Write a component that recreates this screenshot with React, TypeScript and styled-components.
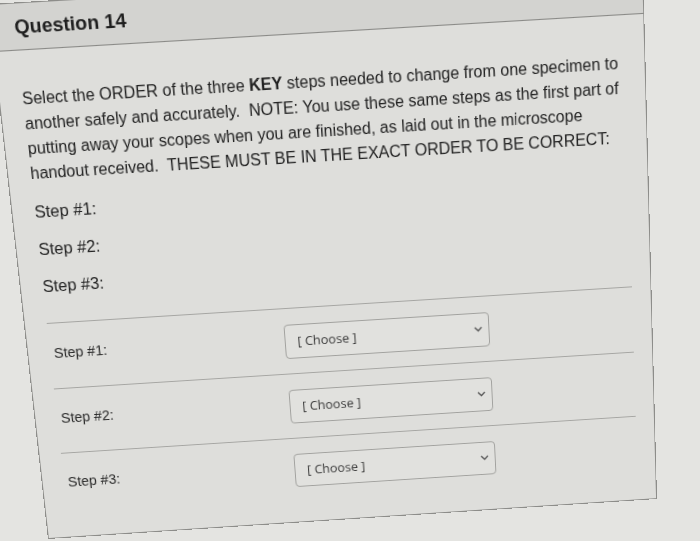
import styled, { createGlobalStyle } from "styled-components";

// the screenshot is a photo of a screen, so the card is mapped onto the
// quad it covers in the photo (corners: top-left, top-right, bottom-right, bottom-left)
const CARD_W = 640;
const CARD_H = 535;
const CARD_QUAD: [number, number][] = [
  [-12, 4],
  [643, -34],
  [657, 499],
  [48, 539],
];

function quadTransform(w: number, h: number, q: [number, number][]) {
  const [[x0, y0], [x1, y1], [x2, y2], [x3, y3]] = q;
  const dx1 = x1 - x2, dx2 = x3 - x2, dx3 = x0 - x1 + x2 - x3;
  const dy1 = y1 - y2, dy2 = y3 - y2, dy3 = y0 - y1 + y2 - y3;
  const den = dx1 * dy2 - dx2 * dy1;
  const g = (dx3 * dy2 - dx2 * dy3) / den;
  const hh = (dx1 * dy3 - dx3 * dy1) / den;
  const a = x1 - x0 + g * x1, b = x3 - x0 + hh * x3;
  const d = y1 - y0 + g * y1, e = y3 - y0 + hh * y3;
  return `matrix3d(${a / w},${d / w},0,${g / w},${b / h},${e / h},0,${hh / h},0,0,1,0,${x0},${y0},0,1)`;
}

const cardTransform = quadTransform(CARD_W, CARD_H, CARD_QUAD);

const GlobalStyle = createGlobalStyle`
  html, body {
    margin: 0;
    padding: 0;
    overflow: hidden;
    background: #e4e4e1;
  }
  #root {
    width: 700px;
    height: 541px;
  }
`;

const Card = styled.section`
  box-sizing: border-box;
  width: ${CARD_W}px;
  height: ${CARD_H}px;
  border: 1px solid #8d8d8a;
  background: #dededb;
  transform-origin: 0 0;
  transform: ${cardTransform};
  font-family: "Liberation Sans", Arial, sans-serif;
  color: #222;
  display: flex;
  flex-direction: column;
`;

const Header = styled.header`
  box-sizing: border-box;
  height: 44px;
  flex: none;
  display: flex;
  align-items: center;
  padding-left: 22px;
  background: #d3d3d0;
  border-bottom: 1px solid #8a8a87;
  font-size: 19px;
  font-weight: 700;
  color: #1f1f1f;
`;

const Body = styled.div`
  padding: 34px 19px 0 22px;
`;

const Prompt = styled.p`
  margin: 0;
  font-size: 16px;
  line-height: 24px;
  white-space: nowrap;
`;

const StepList = styled.div`
  margin-top: 13px;
  display: flex;
  flex-direction: column;
  gap: 13px;
`;

const StepLine = styled.div`
  font-size: 16.5px;
  line-height: 24px;
`;

const Matches = styled.div`
  margin-top: 25px;
`;

const MatchRow = styled.div`
  box-sizing: border-box;
  height: 67px;
  border-top: 1px solid #a6a6a3;
  display: grid;
  grid-template-columns: 235px 210px;
  align-items: center;
  padding-left: 4px;
`;

const MatchLabel = styled.span`
  margin-bottom: 7px;
  font-size: 14.5px;
  color: #2a2a2a;
`;

const Select = styled.div`
  box-sizing: border-box;
  height: 35px;
  display: flex;
  align-items: center;
  justify-content: space-between;
  padding: 0 6px 0 12px;
  border: 1px solid #a2a29f;
  border-radius: 4px;
  background: #e1e1de;
  font-family: "Open Sans", "Liberation Sans", sans-serif;
  font-size: 13px;
  color: #3a3a3a;
`;

const Chevron = () => (
  <svg width="9" height="6" viewBox="0 0 9 6">
    <polyline points="1,1 4.5,4.5 8,1" fill="none" stroke="#555" strokeWidth="1.4" />
  </svg>
);

const steps = ["Step #1:", "Step #2:", "Step #3:"];

export default function App() {
  return (
    <>
      <GlobalStyle />
      <Card>
        <Header>Question 14</Header>
        <Body>
          <Prompt>
            Select the ORDER of the three <b>KEY</b> steps needed to change from one specimen to
            <br />
            another safely and accurately.{"\u00a0 "}NOTE: You use these same steps as the first part of
            <br />
            putting away your scopes when you are finished, as laid out in the microscope
            <br />
            handout received.{"\u00a0 "}THESE MUST BE IN THE EXACT ORDER TO BE CORRECT:
          </Prompt>
          <StepList>
            {steps.map((s) => (
              <StepLine key={s}>{s}</StepLine>
            ))}
          </StepList>
          <Matches>
            {steps.map((s) => (
              <MatchRow key={s}>
                <MatchLabel>{s}</MatchLabel>
                <Select>
                  <span>[ Choose ]</span>
                  <Chevron />
                </Select>
              </MatchRow>
            ))}
          </Matches>
        </Body>
      </Card>
    </>
  );
}
